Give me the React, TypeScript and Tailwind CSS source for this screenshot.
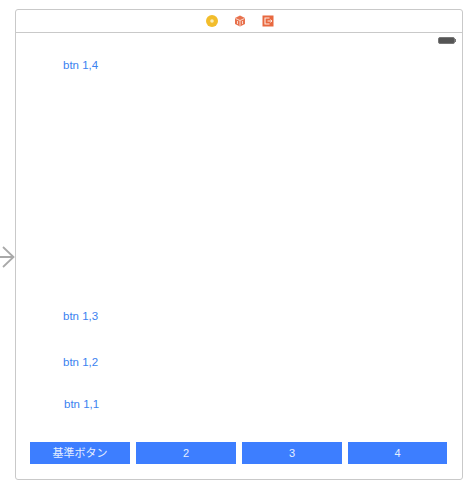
const buttons = [
  { label: "基準ボタン", width: "w-[100px]" },
  { label: "2", width: "w-[100px]" },
  { label: "3", width: "w-[100px]" },
  { label: "4", width: "w-[99px]" },
];

const SceneIcons = () => (
  <div className="flex h-[23px] items-center justify-center gap-[16px] border-b border-[#c9c9c9] pl-[2px]">
    <svg width="12" height="12" viewBox="0 0 12 12">
      <circle cx="6" cy="6" r="6" fill="#f2bd2c" />
      <circle cx="6" cy="6" r="1.8" fill="#fbeeb8" />
    </svg>
    <svg width="12" height="12" viewBox="0 0 12 12">
      <path d="M6 0.5 11 3v6l-5 2.5L1 9V3z" fill="#e8714d" />
      <path d="M1.5 3.5 6 5.5l4.5-2M6 5.5v6M3.5 6v3M8.5 6v3" fill="none" stroke="#fbe3da" strokeWidth="0.9" />
    </svg>
    <svg width="12" height="12" viewBox="0 0 12 12">
      <rect width="11" height="11" x="0.5" y="0.5" fill="#e8683f" />
      <path d="M7.5 3H3v6h4.5" fill="none" stroke="#fde9e1" strokeWidth="1.1" />
      <path d="M5.5 6H10M8.5 4.6 10 6 8.5 7.4" fill="none" stroke="#fde9e1" strokeWidth="1" />
    </svg>
  </div>
);

const Battery = () => (
  <div className="flex items-center justify-end pr-[6px] pt-[4px]">
    <div className="h-[7px] w-[17px] rounded-[2px] border border-[#777] bg-[#555]" />
    <div className="h-[3px] w-[1px] bg-[#777]" />
  </div>
);

const Label = ({ text, className }: { text: string; className: string }) => (
  <div className={`h-[16px] text-[11.5px] leading-[16px] text-[#3b82f0] ${className}`}>{text}</div>
);

const App = () => {
  return (
    <div
      className="relative h-[493px] w-[474px] overflow-hidden bg-white pl-[15px] pr-[11px] pt-[9px]"
      style={{ fontFamily: '"Liberation Sans", "Noto Sans CJK JP", sans-serif' }}
    >
      <div className="h-[471px] w-[448px] rounded-[3px] border border-[#c9c9c9] bg-white">
        <SceneIcons />
        <Battery />
        <div className="flex flex-col pl-[47px]">
          <Label text="btn 1,4" className="mt-[13px]" />
          <Label text="btn 1,3" className="mt-[235px]" />
          <Label text="btn 1,2" className="mt-[30px]" />
          <Label text="btn 1,1" className="ml-[1px] mt-[26px]" />
        </div>
        <div className="mt-[30px] flex gap-[6px] pl-[14px]">
          {buttons.map((button) => (
            <div
              key={button.label}
              className={`flex h-[22px] items-center justify-center bg-[#3d7eff] text-[11px] text-[#e6efff] ${button.width}`}
            >
              {button.label}
            </div>
          ))}
        </div>
      </div>
      <svg className="absolute left-0 top-[245px]" width="15" height="24" viewBox="0 0 15 24">
        <path d="M0 12h13.5M3 2l10.5 10L3 22" fill="none" stroke="#a9a9a9" strokeWidth="1.8" />
      </svg>
    </div>
  );
};

export default App;
